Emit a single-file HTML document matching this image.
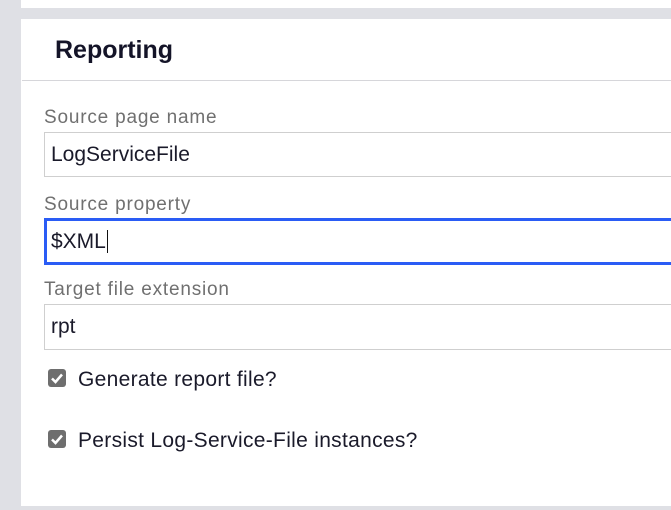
<!DOCTYPE html>
<html><head><style>
body{margin:0;width:671px;height:510px;background:#dfe0e5;position:relative;overflow:hidden;font-family:"Liberation Sans",sans-serif;}
.p{position:absolute;background:#fff;left:21px;right:0;}
.lbl{position:absolute;left:44px;font-size:19px;letter-spacing:0.8px;color:#707070;}
.inp{position:absolute;left:44px;width:650px;height:45px;border:1px solid #cfcfcf;box-sizing:border-box;font-size:21px;color:#1a1a2a;padding-left:6px;line-height:43px;}
.cb{position:absolute;left:48px;width:18px;height:18px;background:#6e6e6e;border-radius:3px;}
.ct{position:absolute;left:78px;font-size:21px;letter-spacing:0.3px;color:#1a1a2a;}
</style></head><body>
<div class="p" style="top:0;height:8px"></div>
<div class="p" style="top:19px;height:487px"></div>
<div style="position:absolute;left:55px;top:36px;font-size:25px;font-weight:bold;color:#141428">Reporting</div>
<div style="position:absolute;left:22px;right:0;top:80px;height:1px;background:#d6d6da"></div>
<div class="lbl" style="top:107px">Source page name</div>
<div class="inp" style="top:132px">LogServiceFile</div>
<div class="lbl" style="top:194px">Source property</div>
<div class="inp" style="top:218px;height:47px;border:3px solid #2a5cf5;padding-left:4px;line-height:41px">$XML<span style="border-left:1px solid #111;margin-left:1px"></span></div>
<div class="lbl" style="top:279px">Target file extension</div>
<div class="inp" style="top:304px;height:46px">rpt</div>
<div class="cb" style="top:369px"><svg width="18" height="18"><path d="M4 9.5l3.5 3.5L14 5.5" stroke="#fff" stroke-width="2.5" fill="none"/></svg></div>
<div class="ct" style="top:368px">Generate report file?</div>
<div class="cb" style="top:430px"><svg width="18" height="18"><path d="M4 9.5l3.5 3.5L14 5.5" stroke="#fff" stroke-width="2.5" fill="none"/></svg></div>
<div class="ct" style="top:429px">Persist Log-Service-File instances?</div>
</body></html>
